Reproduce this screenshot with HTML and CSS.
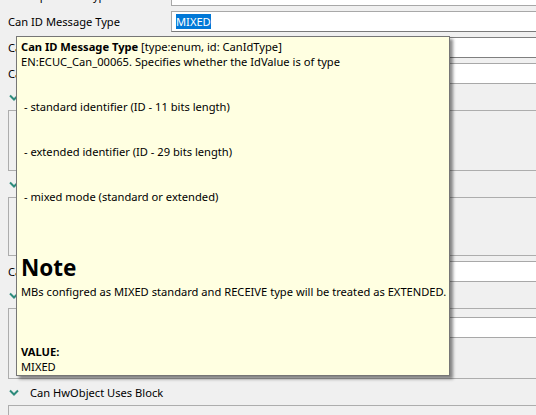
FILE: index.html
```html
<!DOCTYPE html>
<html>
<head>
<meta charset="utf-8">
<link rel="stylesheet" href="styles.css">
</head>
<body>
<div class="page">
  <div class="row"><span class="label">Can Operation Type</span><div class="field"></div></div>
  <div class="row"><span class="label">Can ID Message Type</span><div class="field field-focus"><span class="sel">MIXED</span></div></div>
  <div class="row"><span class="label">Can Controller Ref</span><div class="field field-dark"></div></div>
  <div class="row"><span class="label">Can Object Id</span><div class="field"></div></div>
  <div class="header"><svg class="chev" width="10" height="7" viewBox="0 0 10 7"><polyline points="1,1.5 5,5.5 9,1.5"/></svg><span class="htext">Can Filter Mask</span></div>
  <div class="box box-a"></div>
  <div class="header"><svg class="chev" width="10" height="7" viewBox="0 0 10 7"><polyline points="1,1.5 5,5.5 9,1.5"/></svg><span class="htext">Can Hw Filter</span></div>
  <div class="box box-b"></div>
  <div class="row"><span class="label">Can Hw Object Count</span><div class="field"></div></div>
  <div class="header"><svg class="chev" width="10" height="7" viewBox="0 0 10 7"><polyline points="1,1.5 5,5.5 9,1.5"/></svg><span class="htext">Can Main Function Period</span></div>
  <div class="box box-c"><div class="inner-field"></div></div>
  <div class="header"><svg class="chev" width="10" height="7" viewBox="0 0 10 7"><polyline points="1,1.5 5,5.5 9,1.5"/></svg><span class="htext">Can HwObject Uses Block</span></div>
  <div class="box box-d"></div>
</div>

<div class="tip">
  <p><b>Can ID Message Type</b> [type:enum, id: CanIdType]</p>
  <p>EN:ECUC_Can_00065. Specifies whether the IdValue is of type</p>
  <p class="gap">&nbsp;- standard identifier (ID - 11 bits length)</p>
  <p class="gap">&nbsp;- extended identifier (ID - 29 bits length)</p>
  <p class="gap">&nbsp;- mixed mode (standard or extended)</p>
  <h1 class="note">Note</h1>
  <p>MBs configred as MIXED standard and RECEIVE type will be treated as EXTENDED.</p>
  <p class="value"><b>VALUE:</b></p>
  <p>MIXED</p>
</div>
</body>
</html>
```

FILE: styles.css
```css
html, body {
  margin: 0;
  padding: 0;
}
body {
  background: #f0f0f0;
  font-family: "Noto Sans", "Open Sans", sans-serif;
  font-size: 11.15px;
  color: #000;
  width: 536px;
  height: 415px;
  overflow: hidden;
  position: relative;
}
.page {
  width: 620px;
  padding-left: 8px;
  margin-top: -20px;
  display: flex;
  flex-direction: column;
}
.row {
  display: flex;
  align-items: center;
  height: 21px;
  margin-top: 5px;
}
.label {
  width: 163px;
  flex: none;
  white-space: nowrap;
  overflow: hidden;
}
.field {
  flex: 1;
  height: 21px;
  box-sizing: border-box;
  background: #fff;
  border: 1px solid #a8a8a8;
  display: flex;
  align-items: center;
  padding-left: 4px;
}
.field-focus {
  border-bottom-color: #7a7a7a;
}
.field-dark {
  border-color: #7f7f7f;
}
.sel {
  background: #0078d7;
  color: #fff;
  line-height: 15px;
}
.header {
  height: 26px;
  display: flex;
  align-items: center;
  gap: 11px;
  padding-left: 1px;
}
.chev {
  flex: none;
}
.chev polyline {
  fill: none;
  stroke: #2e8b7c;
  stroke-width: 2;
}
.box {
  box-sizing: border-box;
  border: 1px solid #adadad;
}
.box-a { height: 61px; }
.box-b { height: 59px; }
.box-c {
  height: 71px;
  padding: 8px 0 0 162px;
}
.box-d { height: 40px; }
.inner-field {
  height: 21px;
  box-sizing: border-box;
  background: #fff;
  border: 1px solid #a8a8a8;
}

.tip {
  position: absolute;
  left: 16px;
  top: 36px;
  width: 434px;
  height: 340px;
  box-sizing: border-box;
  background: #ffffe1;
  border: 1px solid #767676;
  box-shadow: 3px 3px 3px rgba(0, 0, 0, 0.45);
  padding: 2px 4px;
  line-height: 15px;
  white-space: nowrap;
}
.tip p {
  margin: 0;
}
.tip .gap {
  margin-top: 30px;
}
.tip .note {
  font-size: 22.5px;
  line-height: 24px;
  margin: 52px 0 4px 0;
  font-weight: bold;
}
.tip .value {
  margin-top: 45px;
}
```
